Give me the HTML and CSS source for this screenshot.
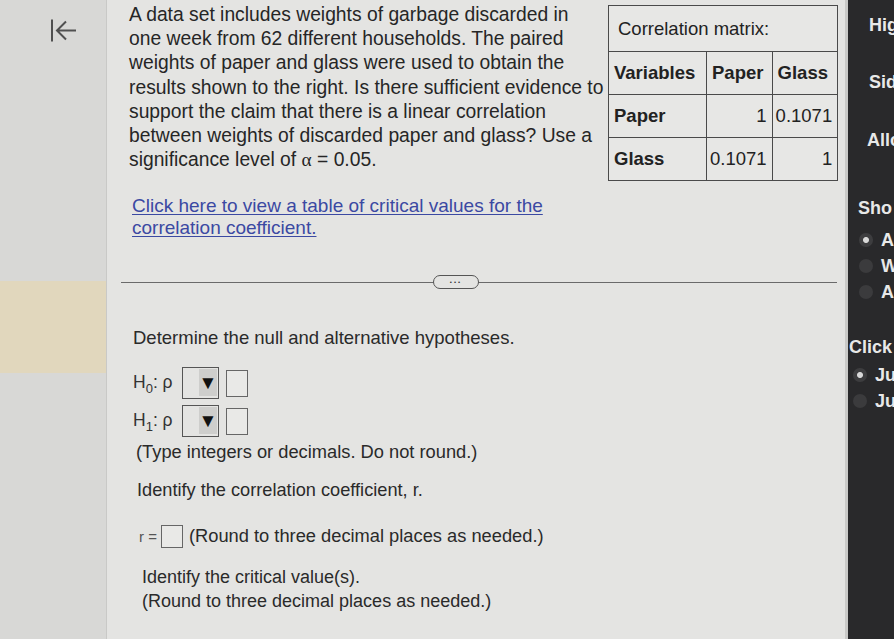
FILE: index.html
```html
<!DOCTYPE html>
<html>
<head>
<meta charset="utf-8">
<link rel="stylesheet" href="styles.css">
</head>
<body>
<div class="screen">
  <aside class="rail">
    <svg class="back" width="27" height="25" viewBox="0 0 27 25">
      <path d="M2 1.5 V23.5 M26 12.5 H8 M16 3.5 L7 12.5 L16 21.5" fill="none" stroke="#505050" stroke-width="2"/>
    </svg>
    <div class="band"></div>
  </aside>
  <main class="main">
    <section class="top">
      <div class="intro">
        <p class="para">A data set includes weights of garbage discarded in<br>one week from 62 different households. The paired<br>weights of paper and glass were used to obtain the<br>results shown to the right. Is there sufficient evidence to<br>support the claim that there is a linear correlation<br>between weights of discarded paper and glass? Use a<br>significance level of <span class="alpha">α</span> = 0.05.</p>
        <p class="link"><a href="#">Click here to view a table of critical values for the<br>correlation coefficient.</a></p>
      </div>
      <table class="matrix">
        <tr class="caprow"><td colspan="3" class="cap">Correlation matrix:</td></tr>
        <tr class="head"><td>Variables</td><td>Paper</td><td>Glass</td></tr>
        <tr><td class="lab">Paper</td><td class="num">1</td><td class="left">0.1071</td></tr>
        <tr><td class="lab">Glass</td><td class="left">0.1071</td><td class="num">1</td></tr>
      </table>
    </section>
    <div class="divider"><span class="more">•••</span></div>
    <section class="question">
      <p class="q">Determine the null and alternative hypotheses.</p>
      <div class="hyp">
        <div class="hrow"><span class="hl">H<sub>0</sub>: ρ</span><span class="dd"><span class="arrow">▼</span></span><span class="box"></span></div>
        <div class="hrow"><span class="hl">H<sub>1</sub>: ρ</span><span class="dd"><span class="arrow">▼</span></span><span class="box"></span></div>
      </div>
      <p class="note">(Type integers or decimals. Do not round.)</p>
      <p class="q2">Identify the correlation coefficient, r.</p>
      <div class="rrow"><span class="rl">r =</span><span class="box small"></span><span>(Round to three decimal places as needed.)</span></div>
      <p class="q3">Identify the critical value(s).<br>(Round to three decimal places as needed.)</p>
    </section>
  </main>
  <aside class="side">
    <div class="s1">Hig</div>
    <div class="s2">Sid</div>
    <div class="s3">Allo</div>
    <div class="s4">Sho</div>
    <div class="radio on r1"><span class="dot"></span>A</div>
    <div class="radio"><span class="dot"></span>W</div>
    <div class="radio"><span class="dot"></span>Al</div>
    <div class="s5">Click</div>
    <div class="radio on r2 first"><span class="dot"></span>Ju</div>
    <div class="radio r2"><span class="dot"></span>Ju</div>
  </aside>
</div>
</body>
</html>
```
FILE: styles.css
```css
html, body { margin: 0; padding: 0; }
body {
  width: 894px; height: 639px; overflow: hidden;
  font-family: "Liberation Sans", Arial, sans-serif;
  color: #2a2a2a;
  background: #e2e2e0;
}
.screen { display: flex; height: 639px; }
.rail {
  width: 106px; flex: none;
  background: #d8d8d6;
  border-right: 1px solid #c9c9c7;
  display: flex; flex-direction: column;
}
.back { margin: 18px 0 0 50px; }
.band { margin-top: 238px; height: 92px; background: #e1d7bd; }
.main { flex: 1; background: #e4e4e2; padding-left: 22px; min-width: 0; }
.top { display: flex; align-items: flex-start; }
.intro { width: 479px; flex: none; }
.para {
  margin: 3px 0 0 0;
  font-size: 19.3px; line-height: 24.2px;
  color: #262626; white-space: nowrap;
}
.alpha { font-family: "Liberation Serif", serif; }
.link { margin: 23px 0 0 3px; font-size: 19px; line-height: 22px; white-space: nowrap; }
.link a { color: #3b49a2; text-decoration: underline; text-decoration-thickness: 1px; text-underline-offset: 2px; }
.matrix {
  border-collapse: collapse;
  margin: 5px 0 0 0;
  font-size: 18.5px; color: #222;
  background: #e7e7e5;
}
.matrix td { border: 1.5px solid #4a4a4a; padding: 0 5px; height: 42px; white-space: nowrap; }
.matrix .caprow td { height: 45px; padding-left: 9px; }
.head td { font-weight: bold; }
.head td:first-child { width: 87px; }
.head td:nth-child(2) { width: 54px; }
.lab { font-weight: bold; }
.num { text-align: right; }
.left { text-align: left; padding-left: 3px !important; }
.divider {
  margin: 43px 8px 0 -8px;
  height: 1px; background: #6a6a6a;
  position: relative;
}
.more {
  position: absolute; left: 312px; top: -7px;
  width: 44px; height: 12px;
  border: 1.5px solid #555; border-radius: 8px;
  background: #e4e4e2;
  font-size: 6px; letter-spacing: 2px; text-align: center; line-height: 12px;
  color: #333;
}
.question { padding-left: 4px; }
.q { margin: 44px 0 0 0; font-size: 18.5px; line-height: 21px; }
.hyp { margin-top: 19px; display: flex; flex-direction: column; gap: 6px; }
.hrow { display: flex; align-items: center; font-size: 17.5px; color: #333; }
.hl { width: 49px; }
.hl sub { font-size: 13px; }
.dd {
  width: 35px; height: 30px; border: 1.5px solid #555;
  display: flex; justify-content: flex-end; align-items: stretch;
}
.arrow {
  width: 18px; background: #cececc; font-size: 19px;
  display: flex; align-items: center; justify-content: center; color: #111;
  margin: 1px 1px 2px 0;
}
.box { width: 20px; height: 25px; border: 1.5px solid #666; background: #e9e9e7; margin-left: 7px; }
.note { margin: 4px 0 0 3px; font-size: 18.3px; line-height: 21px; }
.q2 { margin: 18px 0 0 4px; font-size: 18.2px; line-height: 21px; }
.rrow { margin: 23px 0 0 6px; display: flex; align-items: center; height: 24px; font-size: 18.3px; }
.rl { font-size: 15px; color: #555; margin-right: 4px; }
.box.small { width: 20px; height: 21px; margin: 0 6px 0 0; }
.q3 { margin: 17px 0 0 9px; font-size: 18px; line-height: 24px; }
.side {
  width: 49px; flex: none; background: #29292b;
  color: #e8e8e8; font-weight: bold; font-size: 18px;
  padding-left: 0; box-sizing: border-box;
  border-left: 3px solid #c9c9c7;
  overflow: hidden; white-space: nowrap;
  line-height: 20px;
}
.s1 { margin-top: 15px; padding-left: 21px; }
.s2 { margin-top: 37px; padding-left: 21px; }
.s3 { margin-top: 38px; padding-left: 19px; }
.s4 { margin-top: 48px; padding-left: 10px; }
.radio { display: flex; align-items: center; gap: 8px; height: 26px; padding-left: 11px; }
.r1 { margin-top: 9px; }
.dot { width: 14px; height: 14px; border-radius: 50%; background: #3b3b3d; flex: none; }
.radio.on .dot { background: radial-gradient(circle, #d8d8d8 0 2.5px, #3d3d3f 3.5px); }
.s5 { margin-top: 32px; padding-left: 1px; }
.r2 { padding-left: 5px; }
.r2.first { margin-top: 5px; }
```
